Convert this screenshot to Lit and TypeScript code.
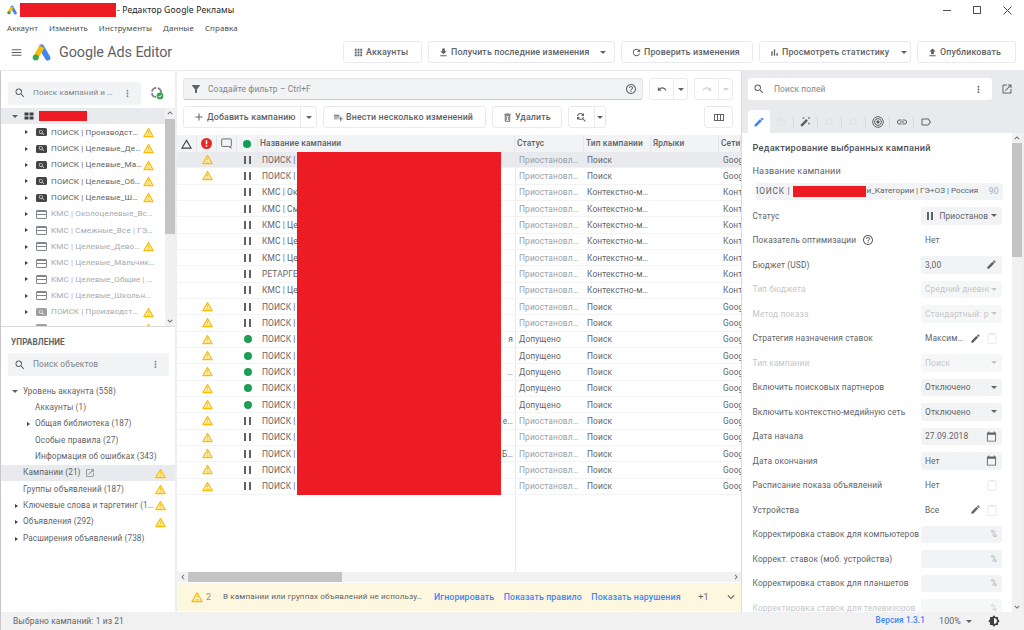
import { LitElement, html, css } from 'lit';
import { customElement } from 'lit/decorators.js';

const P = {
  search: 'M15.5 14h-.79l-.28-.27A6.471 6.471 0 0 0 16 9.5 6.5 6.5 0 1 0 9.5 16c1.61 0 3.09-.59 4.23-1.57l.27.28v.79l5 4.99L20.49 19l-4.99-5zm-6 0C7.01 14 5 11.99 5 9.5S7.01 5 9.5 5 14 7.01 14 9.5 11.99 14 9.5 14z',
  more: 'M12 8c1.1 0 2-.9 2-2s-.9-2-2-2-2 .9-2 2 .9 2 2 2zm0 2c-1.1 0-2 .9-2 2s.9 2 2 2 2-.9 2-2-.9-2-2-2zm0 6c-1.1 0-2 .9-2 2s.9 2 2 2 2-.9 2-2-.9-2-2-2z',
  menu: 'M3 18h18v-2H3v2zm0-5h18v-2H3v2zm0-7v2h18V6H3z',
  apps: 'M4 8h4V4H4v4zm6 12h4v-4h-4v4zm-6 0h4v-4H4v4zm0-6h4v-4H4v4zm6 0h4v-4h-4v4zm6-10v4h4V4h-4zm-6 4h4V4h-4v4zm6 6h4v-4h-4v4zm0 6h4v-4h-4v4z',
  grid4: 'M3 5h8v6H3zM13 5h8v6h-8zM3 13h8v6H3zM13 13h8v6h-8z',
  download: 'M19 9h-4V3H9v6H5l7 7 7-7zM5 18v2h14v-2H5z',
  refresh: 'M17.65 6.35A7.958 7.958 0 0 0 12 4c-4.42 0-7.99 3.58-7.99 8s3.57 8 7.99 8c3.73 0 6.84-2.55 7.73-6h-2.08A5.99 5.99 0 0 1 12 18c-3.31 0-6-2.69-6-6s2.69-6 6-6c1.66 0 3.14.69 4.22 1.78L13 11h7V4l-2.35 2.35z',
  chart: 'M5 9.2h3V19H5zM10.6 5h2.8v14h-2.8zm5.6 8H19v6h-2.8z',
  upload: 'M9 16h6v-6h4l-7-7-7 7h4zm-4 2h14v2H5z',
  funnel: 'M4.25 5.61C6.27 8.2 10 13 10 13v6c0 .55.45 1 1 1h2c.55 0 1-.45 1-1v-6s3.72-4.8 5.74-7.39A.998.998 0 0 0 18.95 4H5.04c-.83 0-1.3.95-.79 1.61z',
  help: 'M11 18h2v-2h-2v2zm1-16C6.48 2 2 6.48 2 12s4.48 10 10 10 10-4.48 10-10S17.52 2 12 2zm0 18c-4.41 0-8-3.59-8-8s3.59-8 8-8 8 3.59 8 8-3.59 8-8 8zm0-14c-2.21 0-4 1.79-4 4h2c0-1.1.9-2 2-2s2 .9 2 2c0 2-3 1.75-3 5h2c0-2.25 3-2.5 3-5 0-2.21-1.79-4-4-4z',
  undo: 'M12.5 8c-2.65 0-5.05.99-6.9 2.6L2 7v9h9l-3.62-3.62c1.39-1.16 3.16-1.88 5.12-1.88 3.54 0 6.55 2.31 7.6 5.5l2.37-.78C21.08 11.03 17.15 8 12.5 8z',
  redo: 'M18.4 10.6C16.55 8.99 14.15 8 11.5 8c-4.65 0-8.58 3.03-9.96 7.22L3.9 16c1.05-3.19 4.05-5.5 7.6-5.5 1.95 0 3.73.72 5.12 1.88L13 16h9V7l-3.6 3.6z',
  add: 'M19 13h-6v6h-2v-6H5v-2h6V5h2v6h6v2z',
  playlist: 'M14 10H2v2h12v-2zm0-4H2v2h12V6zm4 8v-4h-2v4h-4v2h4v4h2v-4h4v-2h-4zM2 16h8v-2H2v2z',
  trash: 'M6 19c0 1.1.9 2 2 2h8c1.1 0 2-.9 2-2V7H6v12zM8 9h8v10H8V9zm1.5 1.5h1.5v7H9.5zm3.5 0h1.5v7H13zM15.5 4l-1-1h-5l-1 1H5v2h14V4z',
  open: 'M19 19H5V5h7V3H5a2 2 0 0 0-2 2v14a2 2 0 0 0 2 2h14c1.1 0 2-.9 2-2v-7h-2v7zM14 3v2h3.59l-9.83 9.83 1.41 1.41L19 6.41V10h2V3h-7z',
  pencil: 'M3 17.25V21h3.75L17.81 9.94l-3.75-3.75L3 17.25zM20.71 7.04a1 1 0 0 0 0-1.41l-2.34-2.34a1 1 0 0 0-1.41 0l-1.83 1.83 3.75 3.75 1.83-1.83z',
  calendar: 'M20 3h-1V1h-2v2H7V1H5v2H4c-1.1 0-2 .9-2 2v16c0 1.1.9 2 2 2h16c1.1 0 2-.9 2-2V5c0-1.1-.9-2-2-2zm0 18H4V8h16v13z',
  link: 'M3.9 12c0-1.71 1.39-3.1 3.1-3.1h4V7H7c-2.76 0-5 2.24-5 5s2.24 5 5 5h4v-1.9H7c-1.71 0-3.1-1.39-3.1-3.1zM8 13h8v-2H8v2zm9-6h-4v1.9h4c1.71 0 3.1 1.39 3.1 3.1s-1.39 3.1-3.1 3.1h-4V17h4c2.76 0 5-2.24 5-5s-2.24-5-5-5z',
  label: 'M17.63 5.84C17.27 5.33 16.67 5 16 5L5 5.01C3.9 5.01 3 5.9 3 7v10c0 1.1.9 1.99 2 1.99L16 19c.67 0 1.27-.33 1.63-.84L22 12l-4.37-6.16zM16 17H5V7h11l3.55 5L16 17z',
  wand: 'M7.5 5.6L10 7 8.6 4.5 10 2 7.5 3.4 5 2l1.4 2.5L5 7zm12 9.8L17 14l1.4 2.5L17 19l2.5-1.4L22 19l-1.4-2.5L22 14zM22 2l-2.5 1.4L17 2l1.4 2.5L17 7l2.5-1.4L22 7l-1.4-2.5zm-7.63 5.29a.996.996 0 0 0-1.41 0L1.29 18.96a.996.996 0 0 0 0 1.41l2.34 2.34c.39.39 1.02.39 1.41 0L16.7 11.05a.996.996 0 0 0 0-1.41l-2.33-2.35z',
  theme: 'M20 15.31L23.31 12 20 8.69V4h-4.69L12 .69 8.69 4H4v4.69L.69 12 4 15.31V20h4.69L12 23.31 15.31 20H20v-4.69zM12 18V6c3.31 0 6 2.69 6 6s-2.69 6-6 6z',
  find: 'M11 6c1.38 0 2.63.56 3.54 1.46L12 10h6V4l-2.05 2.05A6.976 6.976 0 0 0 11 4c-3.53 0-6.43 2.61-6.92 6H6.1A5 5 0 0 1 11 6zm5.64 9.14A6.89 6.89 0 0 0 17.92 12H15.9a5 5 0 0 1-4.9 4c-1.38 0-2.63-.56-3.54-1.46L10 12H4v6l2.05-2.05A6.976 6.976 0 0 0 11 18c1.55 0 2.98-.51 4.14-1.36L20 21.49 21.49 20l-4.85-4.86z',
  chevron: 'M7.41 8.59L12 13.17l4.59-4.58L18 10l-6 6-6-6z',
  up: 'M7.41 15.41L12 10.83l4.59 4.58L18 14l-6-6-6 6z',
};

const ic = (d: string, s = 11) =>
  html`<svg class="ic" viewBox="0 0 24 24" width=${s} height=${s}><path d=${d}></path></svg>`;

const warn = (s = 11) => html`<svg class="warn" viewBox="0 0 24 22" width=${s} height=${s}>
  <path d="M12 2.5 L22 20 H2 Z" fill="#fff8e1" stroke="#fbbc04" stroke-width="2.6" stroke-linejoin="round"></path>
  <path d="M12 8v5M8 16.5h8" stroke="#fbbc04" stroke-width="2.4" fill="none"></path>
</svg>`;

const caret = html`<i class="caret"></i>`;
const pause = html`<i class="pause"></i>`;
const tArrow = html`<i class="arr-r"></i>`;

const adsLogo = (w: number, h: number) => html`<svg viewBox="0 0 24 22" width=${w} height=${h}>
  <path d="M12 4 L20 18" stroke="#4285f4" stroke-width="7" stroke-linecap="round" fill="none"></path>
  <path d="M12.5 3.5 L4.5 17.5" stroke="#fbbc04" stroke-width="7" fill="none"></path>
  <circle cx="4.5" cy="17.5" r="3.9" fill="#34a853"></circle>
</svg>`;

const clip = html`<svg class="clip" viewBox="0 0 12 14" width="10" height="12">
  <path d="M2 2h8a1 1 0 0 1 1 1v9.5a1 1 0 0 1-1 1H2a1 1 0 0 1-1-1V3a1 1 0 0 1 1-1z" fill="none" stroke="#e4e6e8"></path>
  <path d="M4 1h4v2H4z" fill="#e4e6e8"></path>
</svg>`;

const campaignTree: [string, string, boolean, boolean][] = [
  ['s', 'ПОИСК | Производст…', true, false],
  ['s', 'ПОИСК | Целевые_Де…', true, false],
  ['s', 'ПОИСК | Целевые_Ма…', true, false],
  ['s', 'ПОИСК | Целевые_Об…', true, false],
  ['s', 'ПОИСК | Целевые_Шк…', true, false],
  ['d', 'КМС | Околоцелевые_Все…', false, true],
  ['d', 'КМС | Смежные_Все | ГЭ+…', false, true],
  ['d', 'КМС | Целевые_Дево…', true, true],
  ['d', 'КМС | Целевые_Мальчик…', false, true],
  ['d', 'КМС | Целевые_Общие | Г…', false, true],
  ['d', 'КМС | Целевые_Школьна…', false, true],
  ['s', 'ПОИСК | Производст…', true, true],
  ['s', 'ПОИСК | Целевые_Де…', true, true],
];

const manage: [number, boolean | null, string, boolean, boolean][] = [
  [0, true, 'Уровень аккаунта (558)', false, false],
  [1, null, 'Аккаунты (1)', false, false],
  [1, false, 'Общая библиотека (187)', false, false],
  [1, null, 'Особые правила (27)', false, false],
  [1, null, 'Информация об ошибках (343)', false, false],
  [0, null, 'Кампании (21)', true, true],
  [0, null, 'Группы объявлений (187)', true, false],
  [0, false, 'Ключевые слова и таргетинг (1…', true, false],
  [0, false, 'Объявления (292)', true, false],
  [0, false, 'Расширения объявлений (738)', false, false],
];

type Row = { w: boolean; on: boolean; name: string; tail?: string; kms: boolean };
const S = 'ПОИСК | Целевые_Все_Категории';
const K = 'КМС | Целевые_Все';
const rows: Row[] = [
  { w: true, on: false, name: S, kms: false },
  { w: true, on: false, name: S, kms: false },
  { w: false, on: false, name: 'КМС | Околоцелевые', kms: true },
  { w: false, on: false, name: 'КМС | Смежные', kms: true },
  { w: false, on: false, name: K, kms: true },
  { w: false, on: false, name: K, kms: true },
  { w: false, on: false, name: K, kms: true },
  { w: false, on: false, name: 'РЕТАРГЕТИНГ', kms: true },
  { w: false, on: false, name: K, kms: true },
  { w: true, on: false, name: S, kms: false },
  { w: true, on: false, name: S, kms: false },
  { w: true, on: true, name: S, tail: 'я', kms: false },
  { w: true, on: true, name: S, kms: false },
  { w: true, on: true, name: S, tail: '…', kms: false },
  { w: true, on: true, name: S, kms: false },
  { w: true, on: true, name: S, kms: false },
  { w: true, on: false, name: S, tail: 'е…', kms: false },
  { w: true, on: false, name: S, kms: false },
  { w: true, on: false, name: S, tail: 'Б…', kms: false },
  { w: true, on: false, name: S, kms: false },
  { w: true, on: false, name: S, kms: false },
];

type Field = { label: string; off?: boolean; kind: string; value?: string; pen?: boolean };
const fields: Field[] = [
  { label: 'Статус', kind: 'status', value: 'Приостанов' },
  { label: 'Показатель оптимизации', kind: 'plain', value: 'Нет' },
  { label: 'Бюджет (USD)', kind: 'edit', value: '3,00' },
  { label: 'Тип бюджета', off: true, kind: 'select', value: 'Средний дневнс' },
  { label: 'Метод показа', off: true, kind: 'select', value: 'Стандартный: р' },
  { label: 'Стратегия назначения ставок', kind: 'plain', value: 'Максим…', pen: true },
  { label: 'Тип кампании', off: true, kind: 'select', value: 'Поиск' },
  { label: 'Включить поисковых партнеров', kind: 'select', value: 'Отключено' },
  { label: 'Включить контекстно-медийную сеть', kind: 'select', value: 'Отключено' },
  { label: 'Дата начала', kind: 'date', value: '27.09.2018' },
  { label: 'Дата окончания', kind: 'date', value: 'Нет' },
  { label: 'Расписание показа объявлений', kind: 'plain', value: 'Нет' },
  { label: 'Устройства', kind: 'plain', value: 'Все', pen: true },
  { label: 'Корректировка ставок для компьютеров', kind: 'pct' },
  { label: 'Коррект. ставок (моб. устройства)', kind: 'pct' },
  { label: 'Корректировка ставок для планшетов', kind: 'pct' },
  { label: 'Корректировка ставок для телевизоров', off: true, kind: 'pct' },
];

@customElement('app-root')
export class AppRoot extends LitElement {
  static styles = css`
    :host {
      display: flex;
      flex-direction: column;
      width: 1024px;
      height: 630px;
      overflow: hidden;
      background: #fff;
      color: #5f6368;
      font: 8.4px/1.2 Roboto, "Noto Sans", sans-serif;
      letter-spacing: 0.12px;
      position: relative;
    }
    * { box-sizing: border-box; }
    .ic { fill: currentColor; flex: none; display: block; }
    .warn, .clip { flex: none; display: block; }
    .caret { flex: none; width: 0; height: 0; border: 3px solid transparent; border-top: 3.5px solid #5f6368; border-bottom: 0; }
    .arr-r { flex: none; width: 0; height: 0; border: 2.6px solid transparent; border-left: 3.4px solid #3c4043; border-right: 0; }
    .pause { flex: none; width: 6.4px; height: 8px; border-left: 2.5px solid #5f6368; border-right: 2.5px solid #5f6368; }
    .red { background: #ed1c24; flex: none; display: block; }
    .ell { white-space: nowrap; overflow: hidden; text-overflow: ellipsis; min-width: 0; }

    .title { height: 20px; flex: none; display: flex; align-items: center; padding-left: 7px; font: 8.6px "Noto Sans", sans-serif; color: #202124; }
    .title .red { width: 96px; height: 14px; margin: 0 1px 0 3px; }
    .winbtns { margin-left: auto; display: flex; align-items: center; gap: 22px; padding-right: 12px; color: #5a4a55; }
    .min { width: 8px; height: 1px; background: #5a4a55; }
    .max { width: 8px; height: 8px; border: 1px solid #5a4a55; }
    .close { width: 9px; height: 9px; display: block; stroke: #5a4a55; }

    .menu { height: 15px; flex: none; display: flex; align-items: center; gap: 11px; padding-left: 7px; font: 7.9px "Noto Sans", sans-serif; color: #4a4a4a; }

    .head { height: 36px; flex: none; display: flex; align-items: center; border-bottom: 1px solid #e8eaed; padding: 0 8px 1px 10px; color: #5f6368; }
    .brand { display: flex; align-items: center; margin-left: 9px; gap: 8px; font: 14.4px Roboto, sans-serif; letter-spacing: -0.1px; color: #5f6368; }
    .head .btns { margin-left: auto; display: flex; gap: 6px; }
    .btn { height: 22px; display: flex; align-items: center; border: 1px solid #e8eaed; border-radius: 3px; background: #fff; color: #5f6368; font-weight: 500; font-size: 8.9px; gap: 2px; white-space: nowrap; }
    .b-acc { width: 79px; padding-left: 9px; }
    .b-get { width: 187px; padding-left: 9px; }
    .b-get span { width: 147px; }
    .b-chk { width: 132px; padding-left: 9px; }
    .b-stat { width: 152px; padding-left: 9px; }
    .b-stat span { width: 117px; }
    .b-pub { width: 99px; padding-left: 9px; }

    .main { flex: 1; min-height: 0; display: grid; grid-template-columns: 177px 564px 283px; }

    .left { display: flex; flex-direction: column; border-right: 2px solid #eceef0; min-height: 0; border-left: 1px solid #c9c5c8; }
    .l-top { height: 256px; flex: none; display: flex; flex-direction: column; border-bottom: 1px solid #dadce0; }
    .l-search-row { display: flex; align-items: center; padding: 7px 0 0 7px; height: 37px; flex: none; }
    .srch { display: flex; align-items: center; background: #f1f3f4; border-radius: 3px; height: 23px; color: #80868b; }
    .srch .ic:first-child { color: #5f6368; }
    .srch-a { width: 133px; padding: 0 8px 0 6px; gap: 7px; font-size: 8.1px; }
    .srch-a span { flex: 1; }
    .srch-b { width: 161px; padding: 0 8px 0 6px; gap: 7px; margin: 0 7px; }
    .srch-b span { flex: 1; }
    .sync { margin-left: 9px; position: relative; width: 14px; height: 14px; }
    .tree-wrap { flex: 1; min-height: 0; display: flex; padding-top: 0; }
    .tree { flex: 1; min-width: 0; overflow: hidden; }
    .t-row { height: 16.33px; display: flex; align-items: center; color: #5f6368; }
    .t-root { background: #e8eaed; padding-left: 11px; }
    .t-root .caret { margin-right: 5px; }
    .t-root .ic { color: #3c4043; }
    .t-root .red { width: 48px; height: 10px; margin-left: 4px; }
    .t-item { padding: 0 10px 0 24px; font-size: 8.1px; }
    .t-item .box { flex: none; width: 11px; height: 8px; margin: 0 4px 0 8px; border-radius: 1.5px; background: #444; display: flex; align-items: center; justify-content: center; color: #fff; }
    .t-item .tbl { flex: none; width: 11px; height: 9px; margin: 0 4px 0 8px; border-radius: 1.5px; border: 1.2px solid #80868b; border-top-width: 2.4px; background: linear-gradient(#80868b, #80868b) 0 2px/100% 1px no-repeat; }
    .t-item.dim { color: #a5a9ae; }
    .t-item.dim .box { background: #9c9fa3; }
    .t-item .ell { flex: 1; }
    .t-item.hw .ell { flex: none; width: 91px; }
    .t-item .warn { margin-left: 1px; }
    .vbar { width: 10px; flex: none; background: #f1f1f1; display: flex; flex-direction: column; align-items: center; color: #5f6368; }
    .v-thumb { width: 100%; background: #c4c4c4; }
    .t-bar .v-thumb { height: 115px; margin-top: 1px; }
    .t-bar .sp { flex: 1; }

    .l-bot { flex: 1; min-height: 0; }
    .sec { font-weight: 700; font-size: 8.2px; padding: 10.5px 0 0 10px; height: 26px; letter-spacing: 0.1px; }
    .m-list { margin-top: 7.5px; }
    .m-row { height: 16.33px; display: flex; align-items: center; color: #5f6368; position: relative; padding-right: 9px; font-size: 8.2px; }
    .m-row.on { background: #e8eaed; }
    .m-a { width: 22px; flex: none; display: flex; justify-content: flex-end; padding-right: 5px; }
    .m-row.l1 .m-a { width: 34px; }
    .m-row .ell { flex: 0 1 auto; }
    .m-row .ic { margin-left: 4px; color: #80868b; }
    .m-row .warn { margin-left: auto; }

    .center { display: flex; flex-direction: column; min-height: 0; min-width: 0; }
    .tool1 { flex: none; display: flex; gap: 6px; padding: 7px 8px 0 6px; height: 29px; }
    .filter { flex: 1; display: flex; align-items: center; background: #f1f3f4; border: 1px solid #e3e5e8; border-bottom: 1.5px solid #c6c9cc; border-radius: 3px; padding: 0 5px 0 6px; color: #80868b; gap: 6px; }
    .filter span { flex: 1; }
    .filter .ic { color: #5f6368; }
    .grp { width: 39px; height: 22px; display: flex; align-items: center; border: 1px solid #e8eaed; border-radius: 3px; color: #5f6368; }
    .grp > .m { width: 23px; display: flex; justify-content: center; flex: none; }
    .grp > .s { flex: 1; align-self: stretch; border-left: 1px solid #e8eaed; display: flex; align-items: center; justify-content: center; }
    .grp.off { color: #d0d3d6; }
    .grp.off .caret { border-top-color: #d0d3d6; }

    .tool2 { flex: none; display: flex; gap: 6px; padding: 6px 8px 0 6px; height: 35px; }
    .tool2 .btn { padding-left: 0; }
    .add { width: 134px; }
    .add .m { flex: 1; display: flex; align-items: center; gap: 2px; padding-left: 9px; }
    .add .s { width: 16px; align-self: stretch; border-left: 1px solid #e8eaed; display: flex; align-items: center; justify-content: center; }
    .mass { width: 163px; padding-left: 9px !important; }
    .del { width: 70px; padding-left: 9px !important; }
    .fnd { width: 38px; }
    .fnd .m { width: 23px; display: flex; justify-content: center; flex: none; }
    .fnd .s { flex: 1; align-self: stretch; border-left: 1px solid #e8eaed; display: flex; align-items: center; justify-content: center; }
    .cols { width: 29px; margin-left: auto; justify-content: center; }
    .colicon { width: 10px; height: 7px; border: 1px solid #5f6368; background: linear-gradient(90deg, transparent 2.2px, #5f6368 2.2px, #5f6368 3.2px, transparent 3.2px, transparent 4.8px, #5f6368 4.8px, #5f6368 5.8px, transparent 5.8px); }

    .tbl-wrap { flex: 1; min-height: 0; display: flex; flex-direction: column; position: relative; overflow: hidden; }
    .grid { display: grid; grid-template-columns: 20px 20px 20px 21px 257px 69px 67px 68px 22px; align-items: center; }
    .thead { height: 17px; flex: none; background: #f1f3f4; font-weight: 500; color: #5f6368; }
    .thead > div { height: 100%; display: flex; align-items: center; justify-content: center; border-right: 1px solid #e4e6e8; white-space: nowrap; overflow: hidden; }
    .thead > .tx { justify-content: flex-start; padding-left: 2px; }
    .tbody { flex: 1; min-height: 0; background: linear-gradient(#e8eaed, #e8eaed) 338px 0/1.4px 100% no-repeat; }
    .tr { height: 16.33px; border-bottom: 1px solid #f1f3f4; }
    .tr.sel { background: #e8eaed; }
    .tr > div { display: flex; align-items: center; justify-content: center; min-width: 0; height: 100%; }
    .tr > .tx { justify-content: flex-start; white-space: nowrap; overflow: hidden; }
    .tr > .nm { padding: 0 2px 0 4px; justify-content: space-between; color: #5f6368; }
    .tr > .st { padding-left: 4px; color: #9aa0a6; }
    .tr > .st.ok { color: #5f6368; }
    .tr > .ty { padding-left: 3px; color: #5f6368; }
    .tr > .nw { padding-left: 4px; }
    .dot { width: 8px; height: 8px; border-radius: 50%; background: #1e9e54; }
    .hdot { width: 8px; height: 8px; border-radius: 50%; background: #0f9d58; }
    .mask { position: absolute; left: 120px; top: 16.5px; width: 204px; height: 343px; background: #ed1c24; }

    .hbar { height: 10px; flex: none; margin-bottom: 1px; display: flex; align-items: center; background: #f1f1f1; color: #5f6368; }
    .hbar .l { width: 11px; flex: none; display: flex; justify-content: center; }
    .hbar .th { width: 154px; height: 100%; background: #c4c4c4; }
    .hbar .r { margin-left: auto; width: 11px; display: flex; justify-content: center; }
    .hbar .l svg { transform: rotate(90deg); }
    .hbar .r svg { transform: rotate(-90deg); }

    .notice { height: 28px; flex: none; margin-bottom: 1px; background: #fef7e0; display: flex; align-items: center; padding-left: 14px; color: #5f6368; }
    .notice .n { color: #c58a3a; width: 20px; padding-left: 3px; font-size: 9.4px; flex: none; }
    .notice .msg { width: 211px; flex: none; font-size: 8.1px; }
    .notice a { color: #4285f4; font-weight: 500; font-size: 8.8px; margin-right: 9.5px; white-space: nowrap; }
    .notice .pl { margin-left: 8px; font-size: 9px; }
    .notice .chev { margin-left: 15px; display: block; }

    .right { display: flex; flex-direction: column; background: #e8eaed; border-left: 1px solid #dadce0; min-height: 0; }
    .r-top { flex: none; height: 29px; padding: 7px 7px 0 6px; display: flex; align-items: stretch; }
    .fld-s { width: 244px; background: #fff; border-radius: 3px; display: flex; align-items: center; padding: 0 8px 0 5px; gap: 6px; color: #80868b; }
    .fld-s span { flex: 1; margin-left: 3px; }
    .fld-s .ic { color: #5f6368; }
    .ext { margin-left: 9px; display: flex; align-items: center; color: #5f6368; }
    .tabs { flex: none; height: 23px; margin-top: 10px; padding-left: 6px; display: flex; align-items: center; color: #5f6368; }
    .tab-on { width: 22px; height: 23px; background: #fff; border-radius: 4px 4px 0 0; display: flex; align-items: center; justify-content: center; color: #4285f4; }
    .tb { width: 23px; display: flex; justify-content: center; }
    .tb.dis { color: #dfe1e4; }
    .sepv { width: 1px; height: 12px; background: #d5d7da; flex: none; }
    .r-body { flex: 1; min-height: 0; display: flex; }
    .form { width: 270px; flex: none; background: #fff; overflow: hidden; padding: 7px 0 0 10.5px; }
    .form h2 { margin: 0; font: 500 9.2px/15px Roboto, sans-serif; letter-spacing: 0.25px; color: #4d5156; }
    .f-lab { margin-top: 9.5px; height: 14px; display: flex; align-items: center; font-size: 9.1px; }
    .name-in { margin: 4px 0 0 3px; height: 17.5px; width: 247px; background: #f1f3f4; border-radius: 3px; overflow: hidden; display: flex; align-items: center; padding-right: 4px; white-space: nowrap; }
    .name-in .clipd { flex: none; width: 37px; margin-left: -3px; letter-spacing: 0.75px; white-space: nowrap; }
    .name-in .red { width: 73px; height: 11px; margin-left: 3px; }
    .name-in .tl { margin-left: 1px; font-size: 8.1px; letter-spacing: 0; }
    .name-in .cnt { margin-left: auto; color: #9fb0c0; }
    .f-list { margin-top: 3.6px; }
    .f-row { height: 24.5px; display: grid; grid-template-columns: 168.5px 81px; align-items: center; }
    .f-row .lb { display: flex; align-items: center; gap: 6px; white-space: nowrap; }
    .f-row.off .lb { color: #c4c7ca; }
    .ctl { height: 17.5px; border-radius: 3px; display: flex; align-items: center; padding: 0 5px 0 4px; overflow: hidden; white-space: nowrap; color: #5f6368; }
    .ctl.fill { background: #f1f3f4; }
    .ctl .v { flex: 1; min-width: 0; overflow: hidden; }
    .f-row.off .ctl { background: #f6f8f7; color: #c4c7ca; }
    .f-row.off .caret { border-top-color: #c4c7ca; }
    .ctl .pause { margin-right: 6px; margin-left: 2px; }
    .ctl .caret { margin-left: 2px; }
    .ctl .pct { margin-left: auto; color: #a5a9ae; }
    .f-row.off .pct { color: #c4c7ca; }
    .ctl .pen { color: #5f6368; margin-right: 6px; }
    .r-bar .v-thumb { height: 114px; margin-top: 0; }
    .r-bar .sp { flex: 1; }
    .strip { flex: 1; background: #eceef0; }

    .status { height: 18px; flex: none; background: #f1f1f1; display: flex; align-items: center; padding-left: 12px; border-left: 1px solid #c9c5c8; color: #5f6368; }
    .status .ver { margin-left: auto; color: #4285f4; font-weight: 500; font-size: 8.2px; }
    .status .zoom { margin-left: 14px; display: flex; align-items: center; gap: 5px; font-size: 8.9px; }
    .status .th { margin: 0 24px 0 16px; color: #3c4043; }
  `;

  private treeRows() {
    return campaignTree.map(
      ([k, t, w, dim]) => html`<div class="t-row t-item ${dim ? 'dim' : ''} ${w ? 'hw' : ''}">
        ${tArrow}
        ${k === 's' ? html`<span class="box">${ic(P.search, 7)}</span>` : html`<span class="tbl"></span>`}
        <span class="ell">${t}</span>
        ${w ? warn() : ''}
      </div>`,
    );
  }

  private manageRows() {
    return manage.map(
      ([lvl, open, t, w, on]) => html`<div class="m-row ${lvl ? 'l1' : ''} ${on ? 'on' : ''}">
        <span class="m-a">${open === null ? '' : open ? caret : tArrow}</span>
        <span class="ell">${t}</span>
        ${on ? ic(P.open, 10) : ''}
        ${w ? warn() : ''}
      </div>`,
    );
  }

  private tableRows() {
    return rows.map(
      (r, i) => html`<div class="grid tr ${i === 0 ? 'sel' : ''}">
        <div></div>
        <div>${r.w ? warn() : ''}</div>
        <div></div>
        <div>${r.on ? html`<i class="dot"></i>` : pause}</div>
        <div class="tx nm"><span>${r.name}</span><span>${r.tail ?? ''}</span></div>
        <div class="tx st ${r.on ? 'ok' : ''}">${r.on ? 'Допущено' : 'Приостановл…'}</div>
        <div class="tx ty">${r.kms ? 'Контекстно-м…' : 'Поиск'}</div>
        <div></div>
        <div class="tx nw">${r.kms ? 'Конт' : 'Goog'}</div>
      </div>`,
    );
  }

  private control(f: Field) {
    if (f.kind === 'status') return html`<div class="ctl fill">${pause}<span class="v">${f.value}</span>${caret}</div>`;
    if (f.kind === 'select') return html`<div class="ctl fill"><span class="v">${f.value}</span>${caret}</div>`;
    if (f.kind === 'edit') return html`<div class="ctl fill"><span class="v">${f.value}</span>${ic(P.pencil, 11)}</div>`;
    if (f.kind === 'date') return html`<div class="ctl fill"><span class="v">${f.value}</span>${ic(P.calendar, 11)}</div>`;
    if (f.kind === 'pct') return html`<div class="ctl fill"><span class="pct">%</span></div>`;
    return html`<div class="ctl"><span class="v">${f.value}</span>${f.pen ? html`<span class="pen">${ic(P.pencil, 11)}</span>` : ''}${f.label.startsWith('Показатель') ? '' : clip}</div>`;
  }

  render() {
    return html`
      <div class="title">
        ${adsLogo(10, 10)}
        <span class="red"></span>
        <span>- Редактор Google Рекламы</span>
        <div class="winbtns">
          <i class="min"></i><i class="max"></i>
          <svg class="close" viewBox="0 0 9 9"><path d="M.5.5l8 8M8.5.5l-8 8"></path></svg>
        </div>
      </div>
      <div class="menu">
        <span>Аккаунт</span><span>Изменить</span><span>Инструменты</span><span>Данные</span><span>Справка</span>
      </div>
      <div class="head">
        ${ic(P.menu, 13)}
        <div class="brand">${adsLogo(19, 17)}<span>Google Ads Editor</span></div>
        <div class="btns">
          <div class="btn b-acc">${ic(P.apps)}<span>Аккаунты</span></div>
          <div class="btn b-get">${ic(P.download)}<span>Получить последние изменения</span>${caret}</div>
          <div class="btn b-chk">${ic(P.refresh)}<span>Проверить изменения</span></div>
          <div class="btn b-stat">${ic(P.chart)}<span>Просмотреть статистику</span>${caret}</div>
          <div class="btn b-pub">${ic(P.upload)}<span>Опубликовать</span></div>
        </div>
      </div>

      <div class="main">
        <section class="left">
          <div class="l-top">
            <div class="l-search-row">
              <div class="srch srch-a">${ic(P.search, 12)}<span class="ell">Поиск кампаний и г…</span>${ic(P.more, 11)}</div>
              <svg class="sync" viewBox="0 0 14 14">
                <circle cx="6.5" cy="6.5" r="4.6" fill="none" stroke="#80868b" stroke-width="1.8" stroke-dasharray="6 1.5"></circle>
                <circle cx="10" cy="10" r="3.4" fill="#34a853"></circle>
                <path d="M8.5 10l1.1 1.1 2-2" stroke="#fff" fill="none"></path>
              </svg>
            </div>
            <div class="tree-wrap">
              <div class="tree">
                <div class="t-row t-root">${caret}${ic(P.grid4, 12)}<span class="red"></span></div>
                ${this.treeRows()}
              </div>
              <div class="vbar t-bar">
                ${ic(P.up, 10)}<div class="v-thumb"></div><div class="sp"></div>${ic(P.chevron, 10)}
              </div>
            </div>
          </div>
          <div class="l-bot">
            <div class="sec">УПРАВЛЕНИЕ</div>
            <div class="srch srch-b">${ic(P.search, 12)}<span>Поиск объектов</span>${ic(P.more, 11)}</div>
            <div class="m-list">${this.manageRows()}</div>
          </div>
        </section>

        <section class="center">
          <div class="tool1">
            <div class="filter">${ic(P.funnel, 12)}<span>Создайте фильтр – Ctrl+F</span>${ic(P.help, 12)}</div>
            <div class="grp"><span class="m">${ic(P.undo, 10)}</span><span class="s">${caret}</span></div>
            <div class="grp off"><span class="m">${ic(P.redo, 10)}</span><span class="s">${caret}</span></div>
          </div>
          <div class="tool2">
            <div class="btn add"><span class="m">${ic(P.add, 12)}Добавить кампанию</span><span class="s">${caret}</span></div>
            <div class="btn mass">${ic(P.playlist, 11)}<span>Внести несколько изменений</span></div>
            <div class="btn del">${ic(P.trash, 11)}<span>Удалить</span></div>
            <div class="btn fnd"><span class="m">${ic(P.find, 12)}</span><span class="s">${caret}</span></div>
            <div class="btn cols"><i class="colicon"></i></div>
          </div>
          <div class="tbl-wrap">
            <div class="grid thead">
              <div><svg viewBox="0 0 24 22" width="11" height="10"><path d="M12 3L22 20H2Z" fill="none" stroke="#3c4043" stroke-width="2.4"></path></svg></div>
              <div><svg viewBox="0 0 12 12" width="11" height="11"><circle cx="6" cy="6" r="6" fill="#e02b27"></circle><path d="M5.2 2.4h1.6v4.4H5.2zM5.2 8h1.6v1.6H5.2z" fill="#fff"></path></svg></div>
              <div><svg viewBox="0 0 12 12" width="11" height="11"><path d="M1.5 1h9a.8.8 0 0 1 .8.8v6.6a.8.8 0 0 1-.8.8H9.4l1.9 1.8-3.2-1.8H1.5a.8.8 0 0 1-.8-.8V1.8a.8.8 0 0 1 .8-.8z" fill="none" stroke="#5f6368"></path></svg></div>
              <div><i class="hdot"></i></div>
              <div class="tx">Название кампании</div>
              <div class="tx">Статус</div>
              <div class="tx">Тип кампании</div>
              <div class="tx">Ярлыки</div>
              <div class="tx">Сети</div>
            </div>
            <div class="tbody">${this.tableRows()}</div>
            <div class="mask"></div>
          </div>
          <div class="hbar">
            <span class="l">${ic(P.chevron, 10)}</span><div class="th"></div><span class="r">${ic(P.chevron, 10)}</span>
          </div>
          <div class="notice">
            ${warn(12)}<span class="n">2</span>
            <span class="msg ell">В кампании или группах объявлений не использу…</span>
            <a>Игнорировать</a><a>Показать правило</a><a>Показать нарушения</a>
            <span class="pl">+1</span>
            <span class="chev">${ic(P.chevron, 14)}</span>
          </div>
        </section>

        <section class="right">
          <div class="r-top">
            <div class="fld-s">${ic(P.search, 12)}<span>Поиск полей</span>${ic(P.more, 11)}</div>
            <div class="ext">${ic(P.open, 12)}</div>
          </div>
          <div class="tabs">
            <div class="tab-on">${ic(P.pencil, 12)}</div>
            <div class="tb dis">${ic(P.help, 11)}</div><i class="sepv"></i>
            <div class="tb">${ic(P.wand, 11)}</div><i class="sepv"></i>
            <div class="tb dis">${ic(P.refresh, 11)}</div><i class="sepv"></i>
            <div class="tb dis">${ic(P.refresh, 11)}</div><i class="sepv"></i>
            <div class="tb"><svg viewBox="0 0 12 12" width="12" height="12" fill="none" stroke="#5f6368"><circle cx="6" cy="6" r="5.3"></circle><circle cx="6" cy="6" r="3.4"></circle><circle cx="6" cy="6" r="1.2" fill="#5f6368"></circle></svg></div><i class="sepv"></i>
            <div class="tb">${ic(P.link, 12)}</div><i class="sepv"></i>
            <div class="tb">${ic(P.label, 12)}</div>
          </div>
          <div class="r-body">
            <div class="form">
              <h2>Редактирование выбранных кампаний</h2>
              <div class="f-lab">Название кампании</div>
              <div class="name-in">
                <span class="clipd">ПОИСК | </span><span class="red"></span><span class="tl">и_Категории | ГЭ+ОЗ | Россия</span><span class="cnt">90</span>
              </div>
              <div class="f-list">
                ${fields.map(
                  f => html`<div class="f-row ${f.off ? 'off' : ''}">
                    <div class="lb">${f.label}${f.label.startsWith('Показатель') ? ic(P.help, 12) : ''}</div>
                    ${this.control(f)}
                  </div>`,
                )}
              </div>
            </div>
            <div class="vbar r-bar">
              ${ic(P.up, 10)}<div class="v-thumb"></div><div class="sp"></div>${ic(P.chevron, 10)}
            </div>
            <div class="strip"></div>
          </div>
        </section>
      </div>

      <div class="status">
        <span>Выбрано кампаний: 1 из 21</span>
        <span class="ver">Версия 1.3.1</span>
        <span class="zoom">100% ${caret}</span>
        <span class="th">${ic(P.theme, 12)}</span>
      </div>
    `;
  }
}
